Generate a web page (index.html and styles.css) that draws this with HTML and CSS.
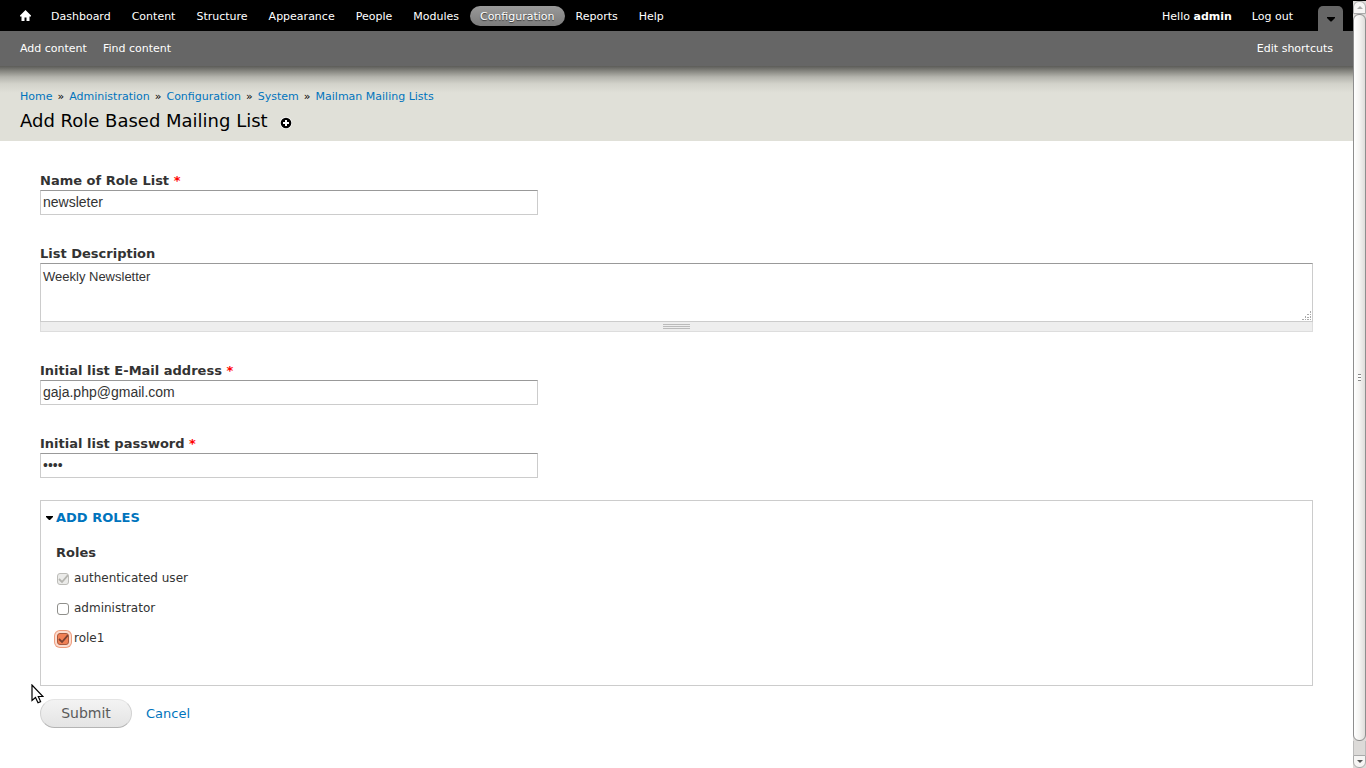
FILE: index.html
```html
<!DOCTYPE html>
<html lang="en">
<head>
  <meta charset="utf-8">
  <title>Add Role Based Mailing List</title>
  <link rel="stylesheet" href="styles.css">
</head>
<body>
<div class="page">
  <header id="toolbar">
    <div class="toolbar-menu">
      <a class="home" href="#" aria-label="Home">
        <svg width="11" height="11" viewBox="0 0 11 11"><path d="M5.5 0L11 5.5V6.5H9.5V11H6.5V7.5H4.5V11H1.5V6.5H0V5.5Z" fill="#fff"/></svg>
      </a>
      <nav>
        <a href="#">Dashboard</a>
        <a href="#">Content</a>
        <a href="#">Structure</a>
        <a href="#">Appearance</a>
        <a href="#">People</a>
        <a href="#">Modules</a>
        <a class="active" href="#">Configuration</a>
        <a href="#">Reports</a>
        <a href="#">Help</a>
      </nav>
      <div class="toolbar-user">
        <a href="#">Hello <strong>admin</strong></a>
        <a href="#">Log out</a>
      </div>
      <button class="toggle" type="button" aria-label="Hide shortcuts">
        <svg width="8" height="5" viewBox="0 0 8 5"><path d="M0 0H8V1L4.5 4.5H3.5L0 1Z" fill="#000"/></svg>
      </button>
    </div>
    <div class="toolbar-drawer">
      <a href="#">Add content</a>
      <a href="#">Find content</a>
      <a class="edit-shortcuts" href="#">Edit shortcuts</a>
    </div>
  </header>

  <div id="branding">
    <div class="breadcrumb">
      <a href="#">Home</a> <span>»</span>
      <a href="#">Administration</a> <span>»</span>
      <a href="#">Configuration</a> <span>»</span>
      <a href="#">System</a> <span>»</span>
      <a href="#">Mailman Mailing Lists</a>
    </div>
    <div class="title-row">
      <h1>Add Role Based Mailing List</h1>
      <a class="add-shortcut" href="#" aria-label="Add to shortcuts">
        <svg width="12" height="12" viewBox="0 0 12 12"><circle cx="6" cy="6" r="6" fill="#fff"/><circle cx="6" cy="6" r="5.3" fill="#000"/><path d="M5 3H7V5H9V7H7V9H5V7H3V5H5Z" fill="#fff"/></svg>
      </a>
    </div>
  </div>

  <form id="content">
    <div class="form-item">
      <label for="name">Name of Role List <span class="required">*</span></label>
      <input class="form-text" type="text" id="name" value="newsleter">
    </div>
    <div class="form-item">
      <label for="description">List Description</label>
      <div class="textarea-wrapper">
        <textarea id="description">Weekly Newsletter</textarea>
        <svg class="corner" width="10" height="10" viewBox="0 0 10 10" fill="#aaa"><path d="M8 0h1v2h-1zM5 3h2v1h-2zM8 3h1v1h-1zM3 5h1v2h-1zM5 6h2v1h-2zM8 5h1v2h-1zM0 8h2v1h-2zM3 8h1v1h-1zM5 8h2v1h-2zM8 8h1v1h-1z"/></svg>
      </div>
      <div class="grippie"><span></span></div>
    </div>
    <div class="form-item">
      <label for="mail">Initial list E-Mail address <span class="required">*</span></label>
      <input class="form-text" type="text" id="mail" value="gaja.php@gmail.com">
    </div>
    <div class="form-item">
      <label for="pass">Initial list password <span class="required">*</span></label>
      <input class="form-text" type="password" id="pass" value="abcd">
    </div>

    <fieldset>
      <a class="fieldset-title" href="#">
        <svg width="7" height="4" viewBox="0 0 7 4"><path d="M0 0H7V1L4 4H3L0 1Z" fill="#000"/></svg>
        Add roles
      </a>
      <div class="roles-label">Roles</div>
      <div class="role">
        <input type="checkbox" id="role-2" checked disabled>
        <label for="role-2">authenticated user</label>
      </div>
      <div class="role">
        <input type="checkbox" id="role-3">
        <label for="role-3">administrator</label>
      </div>
      <div class="role focused">
        <input type="checkbox" id="role-4" checked>
        <label for="role-4">role1</label>
      </div>
    </fieldset>

    <div class="actions">
      <button class="submit" type="submit">Submit</button>
      <a href="#">Cancel</a>
    </div>
  </form>
</div>

<div class="scrollbar">
  <div class="arrow up"><svg width="6" height="3" viewBox="0 0 6 3"><path d="M0 3H6L3 0Z" fill="#aaa"/></svg></div>
  <div class="thumb"><span></span></div>
  <div class="track"></div>
  <div class="arrow"><svg width="6" height="3" viewBox="0 0 6 3"><path d="M0 0H6L3 3Z" fill="#555"/></svg></div>
</div>

<svg class="cursor" width="13" height="20" viewBox="0 0 13 20"><path d="M1 1V16.5L4.5 13.5L7 18.8L9.6 17.6L7.3 12.5H12Z" fill="#fff" stroke="#000" stroke-width="1.2"/></svg>
</body>
</html>
```
FILE: styles.css
```css
* {
  box-sizing: border-box;
}
body {
  margin: 0;
  min-height: 100vh;
  display: flex;
  background: #fff;
  color: #333;
  font-family: "DejaVu Sans", sans-serif;
  font-size: 13px;
  line-height: 18px;
}
a {
  color: #0074bd;
  text-decoration: none;
}
svg {
  display: block;
}
.page {
  flex: 1;
}

/* toolbar */
#toolbar {
  font-size: 11px;
}
#toolbar a {
  color: #fff;
}
.toolbar-menu {
  display: flex;
  align-items: center;
  height: 31px;
  padding: 0 10px 0 20px;
  background: #000;
}
.toolbar-menu nav {
  display: flex;
  flex: 1;
  gap: 1px;
  margin-left: 10px;
}
.toolbar-menu nav a,
.toolbar-user a {
  padding: 1px 10px 0;
  line-height: 19px;
  border-radius: 10px;
}
.toolbar-menu nav a.active {
  background: linear-gradient(#999, #7c7c7c);
  text-shadow: 0 1px 1px #333;
}
.toolbar-user {
  display: flex;
}
.toggle {
  display: flex;
  align-items: center;
  justify-content: center;
  align-self: flex-end;
  width: 25px;
  height: 25px;
  margin-left: 15px;
  padding: 2px 0 0;
  border: 0;
  border-radius: 5px 5px 0 0;
  background: #666;
}
.toolbar-drawer {
  display: flex;
  align-items: center;
  gap: 16px;
  height: 35px;
  padding: 0 20px;
  background: #666;
}
.edit-shortcuts {
  margin-left: auto;
}

/* title area */
#branding {
  padding: 22px 20px 8px;
  color: #000;
  background: #e0e0d8 linear-gradient(#5c5c58, #85857f 5px, #b4b4ad 11px, #d3d3cb 18px, #e0e0d8 27px) no-repeat 0 0 / 100% 27px;
}
.breadcrumb {
  display: flex;
  gap: 5px;
  font-size: 11px;
}
.title-row {
  display: flex;
  align-items: center;
  gap: 12px;
  padding-top: 3px;
}
h1 {
  margin: 0;
  font-size: 18px;
  font-weight: normal;
  line-height: 24px;
}
.add-shortcut {
  padding-top: 4px;
}

/* form */
#content {
  padding: 31px 40px;
}
.form-item {
  margin-bottom: 30px;
}
.form-item label {
  display: block;
  font-weight: bold;
}
.required {
  color: #f00;
}
.form-text,
textarea {
  display: block;
  margin: 0;
  border: 1px solid #ccc;
  border-top-color: #999;
  background: #fff;
  color: #333;
  font-family: "Liberation Sans", Arial, sans-serif;
}
.form-text {
  width: 498px;
  max-width: 100%;
  height: 25px;
  padding: 1px 2px 3px;
  font-size: 14px;
}
.textarea-wrapper {
  position: relative;
}
textarea {
  width: 100%;
  height: 59px;
  padding: 5px 2px;
  font-size: 13px;
  resize: none;
}
.corner {
  position: absolute;
  right: 1px;
  bottom: 1px;
}
.grippie {
  display: flex;
  justify-content: center;
  height: 10px;
  padding-top: 2px;
  border: 1px solid #ddd;
  border-top: 0;
  background: #eee;
}
.grippie span {
  width: 27px;
  height: 5px;
  background: repeating-linear-gradient(#bbb 0 1px, #eee 1px 2px);
}

fieldset {
  margin: -8px 0 13px;
  padding: 8px 15px 26px;
  border: 1px solid #ccc;
}
.fieldset-title {
  display: flex;
  align-items: center;
  gap: 3px;
  margin-left: -10px;
  font-weight: bold;
  text-transform: uppercase;
}
.roles-label {
  margin: 17px 0 7px;
  font-weight: bold;
}
.role {
  display: flex;
  align-items: center;
  height: 18px;
  margin-bottom: 12px;
  font-size: 12px;
}
.role input {
  appearance: none;
  width: 12px;
  height: 12px;
  margin: 2px 5px 0 1px;
  border: 1px solid #8f8f8b;
  border-radius: 3px;
  background: #fff;
}
.role input:checked {
  background: url("data:image/svg+xml,%3Csvg xmlns='http://www.w3.org/2000/svg' viewBox='0 0 12 12'%3E%3Cpath d='M2 6L5 9L11 2' fill='none' stroke='%237a4030' stroke-width='1.8'/%3E%3C/svg%3E") center / 12px 12px, #f08055;
}
.role input:disabled {
  border-color: #bdbdb9;
  background: url("data:image/svg+xml,%3Csvg xmlns='http://www.w3.org/2000/svg' viewBox='0 0 12 12'%3E%3Cpath d='M2 6L5 9L11 2' fill='none' stroke='%23b5b5b0' stroke-width='1.8'/%3E%3C/svg%3E") center / 12px 12px, #ebebe9;
}
.role.focused input {
  border-color: #a85a3e;
  box-shadow: 0 0 0 2px #fbdccf, 0 0 0 3px #ee9c7d;
}

.actions {
  display: flex;
  align-items: center;
  gap: 14px;
}
.submit {
  width: 92px;
  height: 29px;
  padding: 0 0 1px;
  border: 1px solid #e4e4e4;
  border-bottom-color: #b4b4b4;
  border-left-color: #d2d2d2;
  border-right-color: #d2d2d2;
  border-radius: 15px;
  background: linear-gradient(#f3f3f3, #e4e4e4);
  color: #5a5a5a;
  font-family: "DejaVu Sans", sans-serif;
  font-size: 14px;
}

/* window scrollbar */
.scrollbar {
  position: sticky;
  top: 0;
  display: flex;
  flex-direction: column;
  width: 13px;
  height: 100vh;
  border-top: 1px solid #000;
  background: #dcdad8;
}
.arrow {
  display: flex;
  align-items: center;
  justify-content: center;
  height: 13px;
  border: 1px solid #aaa;
  border-radius: 0 0 6px 6px;
  background: #f6f5f4;
}
.arrow.up {
  border-radius: 6px 6px 0 0;
}
.thumb {
  flex: 1;
  display: flex;
  align-items: center;
  justify-content: center;
  border: 1px solid #8e8e8e;
  border-radius: 6px;
  background: linear-gradient(to right, #fff, #f4f3f1 50%, #dfdddb);
}
.thumb span {
  width: 3px;
  height: 7px;
  background: repeating-linear-gradient(#888 0 1px, #fff 1px 3px);
}
.track {
  height: 14px;
  border: 1px solid #bbb;
  border-top: 0;
  border-bottom: 0;
}

/* mouse pointer */
.cursor {
  position: absolute;
  left: 31px;
  top: 684px;
}
```
